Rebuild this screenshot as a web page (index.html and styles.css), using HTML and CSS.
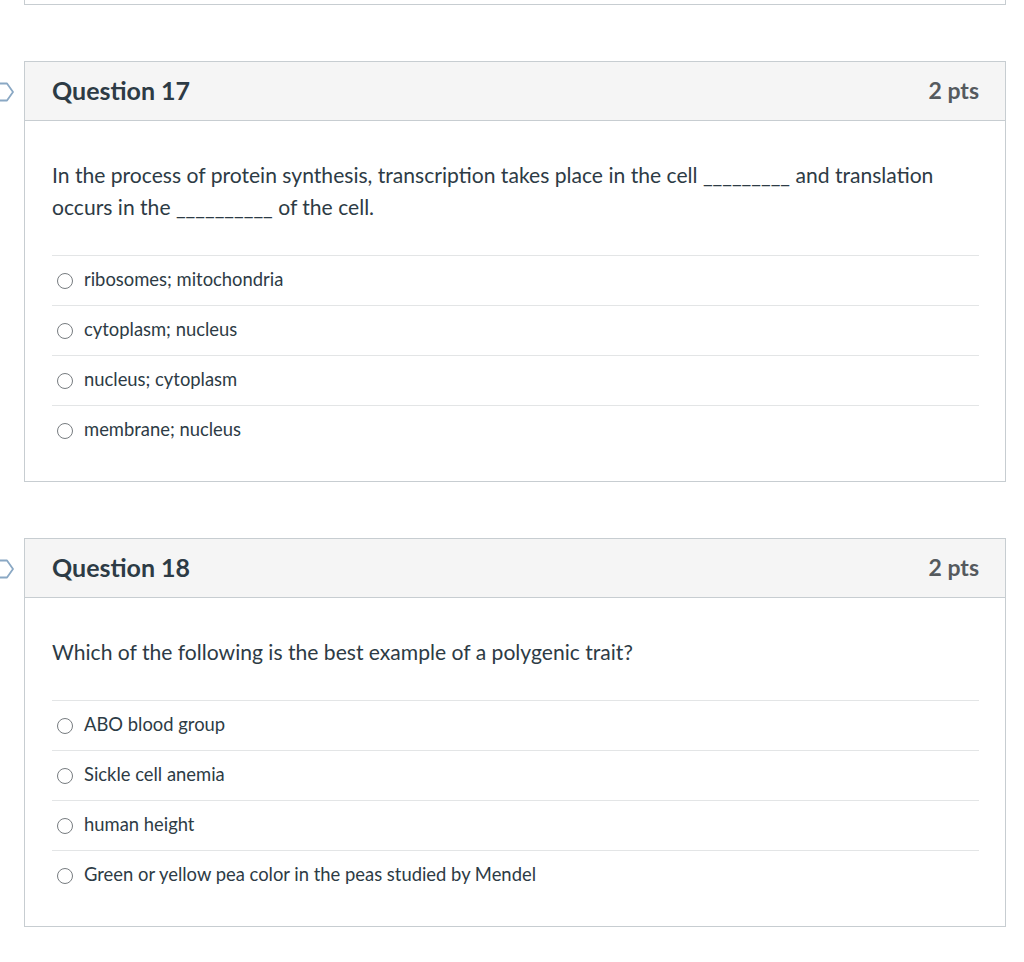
FILE: index.html
```html
<!DOCTYPE html>
<html lang="en">
<head>
<meta charset="utf-8">
<title>Quiz</title>
<link rel="stylesheet" href="styles.css">
</head>
<body>
<div class="wrap">
  <div class="prev"></div>

  <div class="question">
    <svg class="flag" width="24" height="20" viewBox="0 0 24 20"><path d="M-10 1.5 H16 L22 10 L16 18.5 H-10" fill="none" stroke="#8aa8c4" stroke-width="1.8" stroke-linejoin="round"/></svg>
    <div class="q-header">
      <h2 class="q-title">Question 17</h2>
      <span class="q-pts">2 pts</span>
    </div>
    <div class="q-body">
      <p class="q-text">In the process of protein synthesis, transcription takes place in the cell _________ and translation occurs in the __________ of the cell.</p>
      <div class="answers">
        <div class="answer"><span class="radio"></span><span class="label">ribosomes; mitochondria</span></div>
        <div class="answer"><span class="radio"></span><span class="label">cytoplasm; nucleus</span></div>
        <div class="answer"><span class="radio"></span><span class="label">nucleus; cytoplasm</span></div>
        <div class="answer"><span class="radio"></span><span class="label">membrane; nucleus</span></div>
      </div>
    </div>
  </div>

  <div class="question">
    <svg class="flag" width="24" height="20" viewBox="0 0 24 20"><path d="M-10 1.5 H16 L22 10 L16 18.5 H-10" fill="none" stroke="#8aa8c4" stroke-width="1.8" stroke-linejoin="round"/></svg>
    <div class="q-header">
      <h2 class="q-title">Question 18</h2>
      <span class="q-pts">2 pts</span>
    </div>
    <div class="q-body">
      <p class="q-text">Which of the following is the best example of a polygenic trait?</p>
      <div class="answers">
        <div class="answer"><span class="radio"></span><span class="label">ABO blood group</span></div>
        <div class="answer"><span class="radio"></span><span class="label">Sickle cell anemia</span></div>
        <div class="answer"><span class="radio"></span><span class="label">human height</span></div>
        <div class="answer"><span class="radio"></span><span class="label">Green or yellow pea color in the peas studied by Mendel</span></div>
      </div>
    </div>
  </div>
</div>
</body>
</html>
```

FILE: styles.css
```css
* { box-sizing: border-box; }
html, body { margin: 0; padding: 0; background: #fff; }
body {
  font-family: Lato, "Open Sans", "Liberation Sans", sans-serif;
  color: #2d3b45;
}
.wrap {
  width: 1006px;
  padding-left: 24px;
}
.prev {
  height: 5px;
  border: 1px solid #c7cdd1;
  border-top: none;
}
.question {
  position: relative;
  margin-top: 56px;
  border: 1px solid #c7cdd1;
}
.flag {
  position: absolute;
  left: -34px;
  top: 20px;
  overflow: visible;
}
.q-header {
  height: 59px;
  background: #f5f5f5;
  border-bottom: 1px solid #c7cdd1;
  display: flex;
  align-items: center;
  justify-content: space-between;
  padding: 0 26px 0 27px;
}
.q-title {
  margin: 0;
  font-size: 25px;
  font-weight: 700;
  color: #2d3b45;
  line-height: 1;
  margin-top: -2px;
}
.q-pts {
  font-size: 23px;
  font-weight: 700;
  color: #555a5e;
  line-height: 1;
  margin-top: -1px;
}
.q-body {
  padding: 39px 26px 26px 27px;
}
.q-text {
  margin: 0 0 31px 0;
  font-size: 21.1px;
  line-height: 32px;
  padding-right: 40px;
  margin-top: -1px;
  margin-bottom: 32px;
}
.answer {
  height: 50px;
  border-top: 1px solid #e3e5e6;
  display: flex;
  align-items: center;
  padding-left: 5px;
}
.radio {
  width: 16px;
  height: 16px;
  border: 1px solid #777c80;
  border-radius: 50%;
  flex: none;
  margin-right: 11px;
  margin-top: 1px;
}
.label {
  font-size: 18.4px;
  margin-top: -3px;
}
```
